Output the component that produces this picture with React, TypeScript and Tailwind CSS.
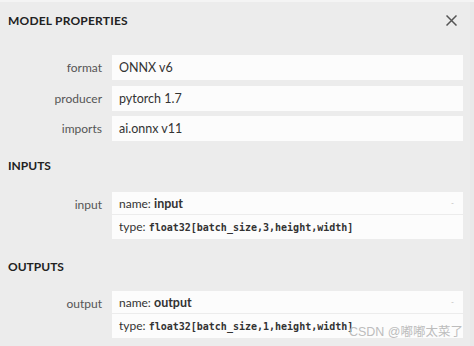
import React from "react";

const mono = { fontFamily: '"DejaVu Sans Mono", "Liberation Mono", monospace' };

function Row({ label, children }: { label: string; children: React.ReactNode }) {
  return (
    <div className="flex items-start">
      <div className="w-[102px] shrink-0 text-right text-[12px] leading-[25px] text-[#555]">{label}</div>
      <div className="ml-[10px] flex-1">{children}</div>
    </div>
  );
}

function Box({ children }: { children: React.ReactNode }) {
  return <div className="h-[25px] bg-[#fcfcfc] px-[7px] text-[12.5px] leading-[25px] text-[#333]">{children}</div>;
}

function IO({ label, name, type }: { label: string; name: string; type: string }) {
  return (
    <Row label={label}>
      <div className="bg-[#fcfcfc] text-[12px] text-[#333]">
        <div className="relative h-[23px] border-b border-[#ececec] px-[7px] leading-[23px]">
          name: <b className="text-[12.5px]">{name}</b>
          <span className="absolute right-[9px] top-0 text-[8px] text-[#bbb]">-</span>
        </div>
        <div className="h-[24px] px-[7px] leading-[24px]">
          type: <span className="text-[10px] font-bold" style={mono}>{type}</span>
        </div>
      </div>
    </Row>
  );
}

export default function App() {
  return (
    <div
      className="relative h-[346px] w-[474px] overflow-hidden border-t-2 border-[#f4f4f4] bg-[#ececec]"
      style={{ fontFamily: 'Lato, "Open Sans", sans-serif' }}
    >
      <div className="flex h-[37px] items-center justify-between pl-[8px] pr-[17px]">
        <div className="text-[12px] font-bold tracking-[0.2px] text-[#222]">MODEL PROPERTIES</div>
        <svg width="11" height="11" viewBox="0 0 11 11" className="text-[#555]">
          <path d="M0.5 0.5L10.5 10.5M10.5 0.5L0.5 10.5" stroke="currentColor" strokeWidth="1.5" />
        </svg>
      </div>
      <div className="mr-[11px] mt-[16px] flex flex-col gap-[5.5px]">
        <Row label="format"><Box>ONNX v6</Box></Row>
        <Row label="producer"><Box>pytorch 1.7</Box></Row>
        <Row label="imports"><Box>ai.onnx v11</Box></Row>
      </div>
      <div className="mt-[12px] pl-[8px] text-[12px] font-bold leading-[25px] text-[#222]">INPUTS</div>
      <div className="mr-[11px] mt-[14px]">
        <IO label="input" name="input" type="float32[batch_size,3,height,width]" />
      </div>
      <div className="mt-[14.5px] pl-[8px] text-[12px] font-bold leading-[25px] text-[#222]">OUTPUTS</div>
      <div className="mr-[11px] mt-[12.5px]">
        <IO label="output" name="output" type="float32[batch_size,1,height,width]" />
      </div>
      <div
        className="absolute bottom-[8px] right-[11px] text-[12.5px] leading-none text-[#bdbdbd]"
        style={{ fontFamily: '"Liberation Sans", "Noto Sans CJK SC", sans-serif' }}
      >
        CSDN @嘟嘟太菜了
      </div>
      <div className="absolute right-0 top-0 h-full w-[4px] bg-[#e9e9e9]" />
    </div>
  );
}
